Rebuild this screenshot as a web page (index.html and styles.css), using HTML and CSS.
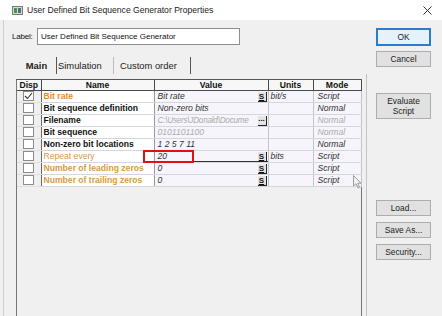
FILE: index.html
```html
<!DOCTYPE html>
<html>
<head>
  <meta charset="UTF-8">
  <title>User Defined Bit Sequence Generator Properties</title>
  <link rel="stylesheet" href="styles.css">
</head>
<body>
  <div class="titlebar">
    <svg class="app-icon" width="11" height="9" viewBox="0 0 11 9">
      <rect x="0.5" y="0.5" width="10" height="8" fill="#d8d8d8" stroke="#7a7a7a"/>
      <rect x="2" y="2" width="3" height="5" fill="#3a9a4a"/>
      <rect x="6" y="2" width="3" height="5" fill="#5a6a7a"/>
    </svg>
    <span class="title">User Defined Bit Sequence Generator Properties</span>
    <svg class="close" width="9" height="9" viewBox="0 0 9 9">
      <path d="M0.5 0.5 L8.5 8.5 M8.5 0.5 L0.5 8.5" stroke="#333" stroke-width="1"/>
    </svg>
  </div>

  <div class="dialog">
    <div class="main">
      <div class="label-row">
        <span class="label-text">Label:</span>
        <div class="textbox">User Defined Bit Sequence Generator</div>
      </div>

      <div class="tabs">
        <span class="tab tab-main">Main</span>
        <span class="tab tab-sim">Simulation</span>
        <span class="tab tab-custom">Custom order</span>
      </div>

      <div class="tabpage">
        <div class="grid">
          <table>
            <colgroup>
              <col class="c-disp"><col class="c-name"><col class="c-value"><col class="c-units"><col class="c-mode">
            </colgroup>
            <tr class="head">
              <th>Disp</th><th>Name</th><th>Value</th><th>Units</th><th>Mode</th>
            </tr>
            <tr>
              <td class="disp"><span class="check on"><svg width="9" height="8" viewBox="0 0 9 8"><path d="M1 4 L3.5 6.5 L8 1" fill="none" stroke="#333" stroke-width="1.1"/></svg></span></td>
              <td class="name hot">Bit rate</td>
              <td class="value"><div class="vcell"><span>Bit rate</span><span class="sbtn">S</span></div></td>
              <td class="units">bit/s</td>
              <td class="mode">Script</td>
            </tr>
            <tr>
              <td class="disp"><span class="check"></span></td>
              <td class="name">Bit sequence definition</td>
              <td class="value"><div class="vcell"><span>Non-zero bits</span></div></td>
              <td class="units"></td>
              <td class="mode">Normal</td>
            </tr>
            <tr>
              <td class="disp"><span class="check"></span></td>
              <td class="name">Filename</td>
              <td class="value dim"><div class="vcell"><span class="path">C:\Users\JDonald\Docume</span><span class="sbtn dots">...</span></div></td>
              <td class="units"></td>
              <td class="mode dim">Normal</td>
            </tr>
            <tr>
              <td class="disp"><span class="check"></span></td>
              <td class="name">Bit sequence</td>
              <td class="value dim"><div class="vcell"><span>0101101100</span></div></td>
              <td class="units"></td>
              <td class="mode dim">Normal</td>
            </tr>
            <tr>
              <td class="disp"><span class="check"></span></td>
              <td class="name">Non-zero bit locations</td>
              <td class="value"><div class="vcell"><span>1 2 5 7 11</span></div></td>
              <td class="units"></td>
              <td class="mode">Normal</td>
            </tr>
            <tr>
              <td class="disp"><span class="check"></span></td>
              <td class="name warm light">Repeat every</td>
              <td class="value editing"><div class="vcell"><span>20</span><span class="sbtn">S</span></div></td>
              <td class="units">bits</td>
              <td class="mode">Script</td>
            </tr>
            <tr>
              <td class="disp"><span class="check"></span></td>
              <td class="name warm">Number of leading zeros</td>
              <td class="value"><div class="vcell"><span>0</span><span class="sbtn">S</span></div></td>
              <td class="units"></td>
              <td class="mode">Script</td>
            </tr>
            <tr>
              <td class="disp"><span class="check"></span></td>
              <td class="name warm">Number of trailing zeros</td>
              <td class="value"><div class="vcell"><span>0</span><span class="sbtn">S</span></div></td>
              <td class="units"></td>
              <td class="mode">Script</td>
            </tr>
          </table>
        </div>
      </div>
    </div>

    <div class="side">
      <div class="btn btn-ok">OK</div>
      <div class="btn btn-cancel">Cancel</div>
      <div class="btn btn-eval">Evaluate<br>Script</div>
      <div class="btn btn-load">Load...</div>
      <div class="btn btn-small">Save As...</div>
      <div class="btn btn-small">Security...</div>
    </div>
  </div>

  <!-- annotation and pointer drawn over the dialog -->
  <div class="highlight"></div>
  <svg class="pointer" width="9" height="14" viewBox="0 0 9 14">
    <path d="M0.5 0.5 L0.5 11 L3 8.7 L5 13 L6.6 12.3 L4.7 8.2 L8 8.2 Z" fill="#f4f4f4" stroke="#9a9a9a" stroke-width="1"/>
  </svg>
</body>
</html>
```

FILE: styles.css
```css
html, body {
  margin: 0;
  padding: 0;
}
body {
  width: 442px;
  height: 316px;
  overflow: hidden;
  position: relative;
  background: #f0f0f0;
  font-family: "Liberation Sans", Arial, sans-serif;
  color: #111;
}

/* title bar */
.titlebar {
  height: 20px;
  background: #fff;
  display: flex;
  align-items: center;
  padding-left: 12px;
  box-sizing: border-box;
}
.app-icon {
  flex: none;
}
.title {
  margin-left: 4px;
  font-size: 8.6px;
  color: #222;
  flex: 1;
}
.close {
  margin-right: 10px;
}

/* dialog body */
.dialog {
  display: flex;
  height: 296px;
}
.main {
  margin-left: 3px;
  width: 362px;
  border-left: 1px solid #cfcfcf;
  display: flex;
  flex-direction: column;
}
.label-row {
  display: flex;
  align-items: center;
  margin-top: 8px;
  height: 17px;
  padding-left: 8px;
}
.label-text {
  font-size: 8px;
  width: 25px;
  letter-spacing: -0.2px;
}
.textbox {
  width: 203px;
  height: 17px;
  box-sizing: border-box;
  background: #fff;
  border: 1px solid #8e8e8e;
  font-size: 8px;
  line-height: 15px;
  padding-left: 3px;
}

/* tabs */
.tabs {
  display: flex;
  margin-top: 12px;
  height: 17px;
  padding-left: 13px;
}
.tab {
  font-size: 9.4px;
  line-height: 17px;
  color: #222;
  border-right: 1px solid #bdbdbd;
}
.tab-main {
  width: 39px;
  text-align: center;
  font-weight: bold;
  border-right-color: #555;
}
.tab-sim {
  width: 55px;
  padding-left: 1px;
}
.tab-custom {
  width: 70px;
  padding-left: 6px;
  border-right-color: #555;
}

.tabpage {
  flex: 1;
  padding-top: 5px;
  padding-left: 12px;
  border-right: 1px solid #c4c4c4;
  margin-right: -1px;
}
.grid {
  height: 100%;
  width: 346px;
  box-sizing: border-box;
  border-left: 1px solid #777;
  border-right: 1px solid #777;
  border-top: 1px solid #555;
}

/* property table */
table {
  table-layout: fixed;
  border-collapse: collapse;
  width: 344px;
  font-size: 8.6px;
}
.c-disp { width: 24px; }
.c-name { width: 113px; }
.c-value { width: 114px; }
.c-units { width: 45px; }
.c-mode { width: 48px; }
th {
  height: 10px;
  padding: 0;
  line-height: 10px;
  background: #f7f7f7;
  font-weight: bold;
  border-right: 1px solid #4a4a4a;
  border-bottom: 1px solid #4a4a4a;
}
td {
  height: 11px;
  padding: 0 0 0 2px;
  line-height: 11px;
  border-bottom: 1px solid #d6d6de;
  border-right: 1px solid #c2c2cc;
  white-space: nowrap;
  overflow: hidden;
}
td.disp {
  padding: 0;
  text-align: center;
  background: #efefef;
  border-right: 1px solid #6a6a6a;
  border-bottom: 1px solid #e0e0e0;
}
.check {
  display: inline-block;
  width: 11px;
  height: 10px;
  box-sizing: border-box;
  border: 1px solid #8c8c8c;
  background: #fff;
  vertical-align: middle;
  position: relative;
  top: -1px;
}
.check svg {
  display: block;
}
td.name {
  background: #fff;
  font-weight: bold;
  border-right: 1px solid #9a9a9a;
}
td.name.hot {
  color: #ee8a1a;
}
td.name.warm {
  color: #d99a45;
}
td.name.light {
  font-weight: normal;
  color: #d4994c;
}
td.value, td.units, td.mode {
  background: #f5f5fb;
  font-style: italic;
  color: #333;
}
td.value {
  padding-left: 3px;
}
td.mode {
  padding-left: 4px;
}
td.dim, td.dim span {
  color: #ababab;
}
.vcell {
  display: flex;
  align-items: center;
  justify-content: space-between;
}
.path {
  font-size: 8.2px;
  letter-spacing: -0.25px;
}
.sbtn {
  flex: none;
  width: 9px;
  height: 10px;
  margin-right: 1px;
  box-sizing: border-box;
  background: #e4e4e4;
  border-right: 1px solid #222;
  border-bottom: 1px solid #222;
  font-style: normal;
  font-weight: bold;
  font-size: 8px;
  line-height: 9px;
  text-align: center;
  text-decoration: underline;
  color: #111;
}
td.dim .sbtn.dots {
  text-decoration: none;
  line-height: 6px;
  color: #111;
}
td.editing .vcell {
  box-shadow: inset 0 -1px 0 #333;
}

/* side buttons */
.side {
  margin-left: 10px;
  width: 55px;
  display: flex;
  flex-direction: column;
}
.btn {
  box-sizing: border-box;
  height: 16px;
  background: #e1e1e1;
  border: 1px solid #adadad;
  font-size: 8.4px;
  color: #222;
  display: flex;
  align-items: center;
  justify-content: center;
  text-align: center;
  margin-top: 6px;
}
.btn-ok {
  margin-top: 8px;
  height: 18px;
  border: 2px solid #2b7bd0;
  background: #e5f1fb;
}
.btn-cancel {
  margin-top: 5px;
}
.btn-eval {
  margin-top: 26px;
  height: 26px;
  line-height: 10px;
}
.btn-load {
  margin-top: 81px;
}

/* overlays */
.highlight {
  position: absolute;
  left: 143px;
  top: 150px;
  width: 51px;
  height: 13px;
  box-sizing: border-box;
  border: 2px solid #e31010;
}
.pointer {
  position: absolute;
  left: 353px;
  top: 175px;
}
```
